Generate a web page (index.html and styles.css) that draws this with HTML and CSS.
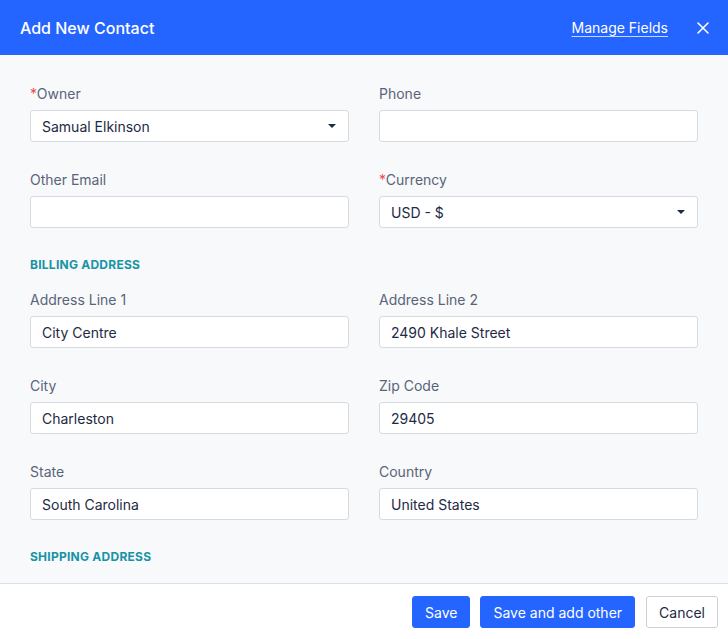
FILE: index.html
```html
<!DOCTYPE html>
<html>
<head>
<meta charset="utf-8">
<link rel="stylesheet" href="styles.css">
</head>
<body>
<div class="modal">
  <header class="modal-header">
    <h1 class="title">Add New Contact</h1>
    <div class="header-actions">
      <a class="manage-link" href="#">Manage Fields</a>
      <button class="close-btn" aria-label="Close">
        <svg width="12" height="12" viewBox="0 0 12 12"><path d="M1 1L11 11M11 1L1 11" stroke="#fff" stroke-width="1.6" stroke-linecap="round"/></svg>
      </button>
    </div>
  </header>
  <main class="modal-body">
    <div class="grid">
      <div class="field">
        <label class="label"><span class="req">*</span>Owner</label>
        <div class="input select">Samual Elkinson<span class="caret"></span></div>
      </div>
      <div class="field">
        <label class="label">Phone</label>
        <div class="input"></div>
      </div>
      <div class="field">
        <label class="label">Other Email</label>
        <div class="input"></div>
      </div>
      <div class="field">
        <label class="label"><span class="req">*</span>Currency</label>
        <div class="input select">USD - $<span class="caret"></span></div>
      </div>
    </div>
    <h2 class="section-title">Billing Address</h2>
    <div class="grid">
      <div class="field">
        <label class="label">Address Line 1</label>
        <div class="input">City Centre</div>
      </div>
      <div class="field">
        <label class="label">Address Line 2</label>
        <div class="input">2490 Khale Street</div>
      </div>
      <div class="field">
        <label class="label">City</label>
        <div class="input">Charleston</div>
      </div>
      <div class="field">
        <label class="label">Zip Code</label>
        <div class="input">29405</div>
      </div>
      <div class="field">
        <label class="label">State</label>
        <div class="input">South Carolina</div>
      </div>
      <div class="field">
        <label class="label">Country</label>
        <div class="input">United States</div>
      </div>
    </div>
    <h2 class="section-title">Shipping Address</h2>
  </main>
  <footer class="modal-footer">
    <button class="btn btn-primary">Save</button>
    <button class="btn btn-primary">Save and add other</button>
    <button class="btn btn-secondary">Cancel</button>
  </footer>
</div>
</body>
</html>
```
FILE: styles.css
```css
* { box-sizing: border-box; }
html, body { margin: 0; padding: 0; }
body {
  font-family: Inter, "Noto Sans", sans-serif;
  background: #f8f9fb;
  width: 728px;
  height: 639px;
  overflow: hidden;
}
.modal {
  display: flex;
  flex-direction: column;
  height: 639px;
}
.modal-header {
  height: 55px;
  background: #2465ff;
  display: flex;
  align-items: center;
  justify-content: space-between;
  padding: 0 19px 0 20px;
  flex-shrink: 0;
}
.title {
  margin: 0;
  color: #fff;
  font-size: 16px;
  font-weight: 500;
}
.header-actions {
  display: flex;
  align-items: center;
  gap: 29px;
}
.manage-link {
  color: #fff;
  font-size: 14px;
  text-decoration: underline;
  text-underline-offset: 3px;
  text-decoration-color: rgba(255,255,255,0.75);
}
.close-btn {
  background: none;
  border: 0;
  padding: 0;
  width: 12px;
  height: 12px;
  display: flex;
  cursor: pointer;
}
.modal-body {
  flex: 1;
  padding: 29px 30px 0 30px;
  background: #f8f9fb;
  overflow: hidden;
}
.grid {
  display: grid;
  grid-template-columns: 1fr 1fr;
  column-gap: 30px;
  row-gap: 28px;
}
.field {
  display: flex;
  flex-direction: column;
  gap: 6px;
}
.label {
  font-size: 14px;
  line-height: 20px;
  height: 20px;
  color: #5a6478;
}
.req { color: #f0484a; }
.input {
  height: 32px;
  background: #fff;
  border: 1px solid #d6dae1;
  border-radius: 3px;
  padding: 0 11px;
  display: flex;
  align-items: center;
  font-size: 14px;
  color: #1d2a45;
}
.select { justify-content: space-between; }
.caret {
  width: 0;
  height: 0;
  border-left: 4px solid transparent;
  border-right: 4px solid transparent;
  border-top: 4px solid #1d2a45;
  margin-right: 1px;
}
.section-title {
  margin: 30px 0 18px;
  font-size: 12px;
  line-height: 14px;
  font-weight: 700;
  color: #1793a6;
  text-transform: uppercase;
  letter-spacing: 0.25px;
}
.modal-footer {
  flex-shrink: 0;
  height: 56px;
  background: #fff;
  border-top: 1px solid #dcdfe5;
  display: flex;
  justify-content: flex-end;
  align-items: flex-start;
  padding: 12px 10px 0 0;
  gap: 10px;
}
.btn {
  height: 32px;
  border-radius: 3px;
  font-family: Inter, "Noto Sans", sans-serif;
  font-size: 14px;
  padding: 0 12px;
  cursor: pointer;
}
.btn-primary {
  background: #2465ff;
  color: #fff;
  border: 1px solid #2465ff;
}
.btn-secondary {
  background: #fff;
  color: #1d2a45;
  border: 1px solid #ccd1d9;
  margin-left: 1px;
}
```
